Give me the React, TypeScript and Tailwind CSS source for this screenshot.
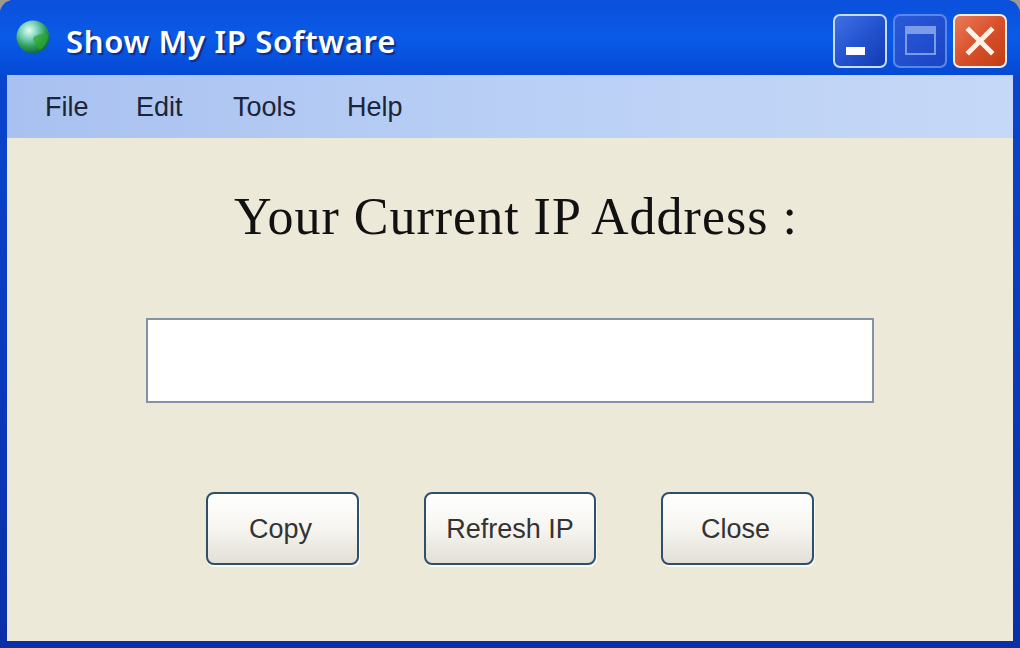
import React from "react";

const menuItems = [
  { label: "File", className: "w-[91px]" },
  { label: "Edit", className: "w-[97px]" },
  { label: "Tools", className: "w-[114px]" },
  { label: "Help", className: "w-[80px]" },
];

const GlobeIcon = () => (
  <svg width="36" height="38" viewBox="0 0 36 38">
    <defs>
      <radialGradient id="globe" cx="38%" cy="30%" r="70%">
        <stop offset="0%" stopColor="#e8fbf2" />
        <stop offset="35%" stopColor="#7fd6c0" />
        <stop offset="70%" stopColor="#2f9e58" />
        <stop offset="100%" stopColor="#136b45" />
      </radialGradient>
    </defs>
    <circle cx="18" cy="19" r="16.5" fill="url(#globe)" />
    <path d="M20 18c4-2 9-3 13-1 0 6-3 12-8 15-3-2-3-5-5-7-2-2-3-5 0-7z" fill="#2fa62f" opacity="0.7" />
  </svg>
);

const MinimizeButton = () => (
  <div className="flex h-[54px] w-[54px] items-end rounded-[7px] border-2 border-[#c5dcfb] bg-gradient-to-br from-[#3f70e4] via-[#2453d0] to-[#123bb0] pb-[11px] pl-[11px]">
    <div className="h-[8px] w-[19px] bg-white" />
  </div>
);

const MaximizeButton = () => (
  <div className="flex h-[54px] w-[54px] items-center justify-center rounded-[7px] border-2 border-[#5a87ea] bg-gradient-to-br from-[#2a5ad8] to-[#1a45c4]">
    <div className="h-[29px] w-[31px] border-2 border-t-[8px] border-[#7d9ce8]" />
  </div>
);

const CloseButton = () => (
  <div className="flex h-[54px] w-[54px] items-center justify-center rounded-[7px] border-2 border-[#f4efe9] bg-gradient-to-br from-[#e77a58] via-[#d8502a] to-[#c23c12]">
    <svg width="32" height="32" viewBox="0 0 32 32">
      <path d="M5 5l22 22M27 5L5 27" stroke="#fff3e8" strokeWidth="5" strokeLinecap="square" />
    </svg>
  </div>
);

const ActionButton = ({ label, className }: { label: string; className: string }) => (
  <button
    className={`h-[73px] rounded-[8px] border-[2.5px] border-[#2f4f6b] bg-gradient-to-b from-white via-[#f6f5f0] to-[#e2dfd6] pt-[1px] text-[27px] text-[#333] shadow-[1px_2px_0_#fbfbf6] ${className}`}
  >
    {label}
  </button>
);

export default function App() {
  return (
    <div className="h-[648px] w-[1020px] bg-[#9a9a90]">
      <div className="flex h-[648px] flex-col overflow-hidden rounded-t-[14px] bg-gradient-to-b from-[#0a48d4] to-[#0a2fa8] font-['Liberation_Sans',sans-serif]">
        {/* title bar */}
        <div className="flex h-[75px] items-center bg-gradient-to-b from-[#0a50dc] via-[#0a5ae8] to-[#0549d4] pl-[15px] pr-[13px]">
          <div className="mb-[2px]">
            <GlobeIcon />
          </div>
          <span className="ml-[15px] flex-1 pt-[8px] font-['Noto_Sans',sans-serif] text-[31px] font-semibold tracking-[0.7px] text-white [text-shadow:2px_2px_1px_#0a2f90]">
            Show My IP Software
          </span>
          <div className="mt-[6px] flex gap-[6px]">
            <MinimizeButton />
            <MaximizeButton />
            <CloseButton />
          </div>
        </div>

        <div className="mx-[7px] mb-[7px] flex flex-1 flex-col bg-[#ece9d8]">
          {/* menu */}
          <div className="flex h-[63px] items-center bg-gradient-to-r from-[#a9c1f0] via-[#b9cff5] to-[#c6d8f7] pl-[38px] pt-[1px] text-[27px] text-[#1d2438]">
            {menuItems.map((item) => (
              <span key={item.label} className={item.className}>
                {item.label}
              </span>
            ))}
          </div>

          {/* body */}
          <div className="flex flex-1 flex-col items-center">
            <h1 className="mt-[48px] ml-[12px] font-['Liberation_Serif',serif] text-[52px] leading-[62px] font-normal tracking-[1px] text-[#111]">
              Your Current IP Address :
            </h1>
            <input
              readOnly
              className="mt-[70px] h-[85px] w-[728px] border-2 border-[#8293a8] bg-white"
            />
            <div className="mt-[89px] flex gap-[65px]">
              <ActionButton label="Copy" className="w-[153px] pr-[4px]" />
              <ActionButton label="Refresh IP" className="w-[172px]" />
              <ActionButton label="Close" className="w-[153px] pr-[4px]" />
            </div>
          </div>
        </div>
      </div>
    </div>
  );
}
